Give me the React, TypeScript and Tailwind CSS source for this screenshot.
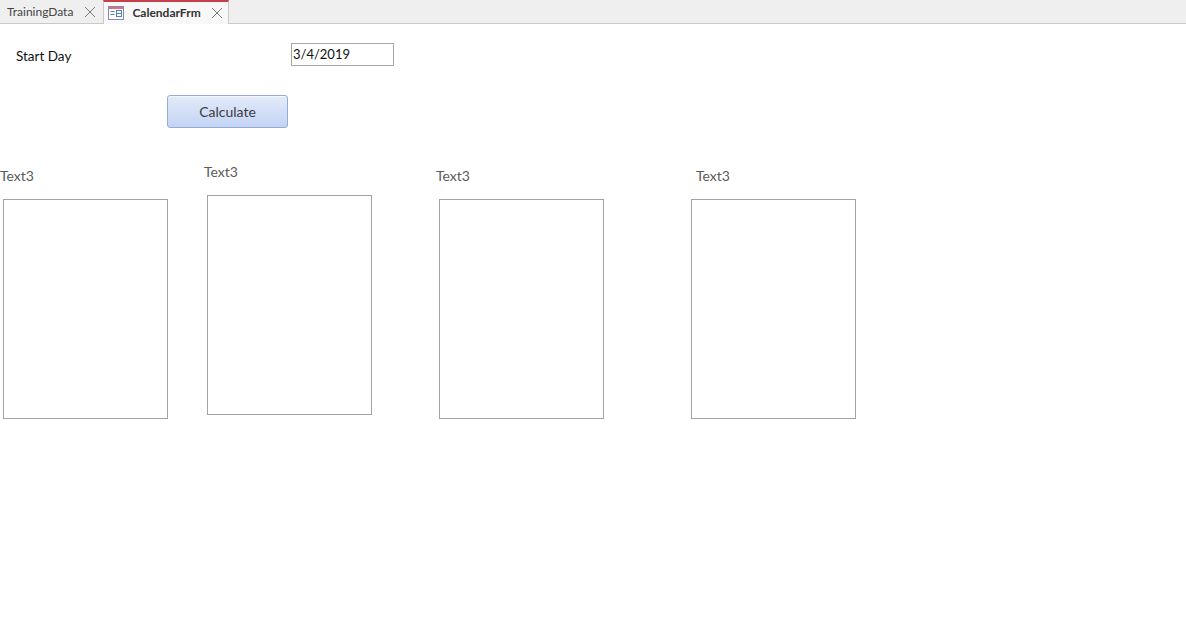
import React from "react";

const font = { fontFamily: "Lato, 'Open Sans', sans-serif" };

const FormIcon = () => (
  <svg width="16" height="14" viewBox="0 0 16 14">
    <rect x="0.5" y="0.5" width="15" height="13" fill="#fff" stroke="#8a8aa6" />
    <rect x="1" y="1" width="14" height="2" fill="#d9707a" />
    <rect x="2.5" y="5" width="4" height="1" fill="#4f7fc4" />
    <rect x="2.5" y="8" width="4" height="1" fill="#4f7fc4" />
    <rect x="8.5" y="4.5" width="5" height="6" fill="#fff" stroke="#4f7fc4" />
    <rect x="9" y="7" width="4" height="1" fill="#4f7fc4" />
  </svg>
);

const CloseX = () => (
  <svg width="12" height="12" viewBox="0 0 12 12">
    <path d="M1 1 L11 11 M11 1 L1 11" stroke="#7a7a7a" strokeWidth="1" fill="none" />
  </svg>
);

const columns = [
  { id: 1, colClass: "ml-0 mt-[4px]", labelClass: "ml-0", boxClass: "ml-[3px]" },
  { id: 2, colClass: "ml-[36px] mt-0", labelClass: "ml-0", boxClass: "ml-[3px]" },
  { id: 3, colClass: "ml-[64px] mt-[4px]", labelClass: "ml-0", boxClass: "ml-[3px]" },
  { id: 4, colClass: "ml-[87px] mt-[4px]", labelClass: "ml-[5px]", boxClass: "ml-0" },
];

const App = () => {
  return (
    <div className="w-full h-screen bg-white text-[#222]" style={font}>
      {/* document tabs */}
      <div className="flex h-[24px] bg-[#efefef] border-b border-[#c9c9c9]">
        <div className="flex items-center h-full pl-[7px] pr-[7px] text-[12px] text-[#444]">
          <span>TrainingData</span>
          <span className="ml-[11px] flex"><CloseX /></span>
        </div>
        <div className="flex items-center h-[24px] w-[126px] bg-[#f8f8f8] border-t-2 border-t-[#c4404a] border-x border-x-[#c9c9c9] pl-[4px]">
          <FormIcon />
          <span className="ml-[8px] text-[12px] font-bold text-[#333]">CalendarFrm</span>
          <span className="ml-[10px] flex"><CloseX /></span>
        </div>
      </div>

      {/* form body */}
      <div className="flex items-start">
        <div className="w-[291px] pl-[16px] pt-[24px] text-[13.5px] leading-[16px] text-[#111]">
          Start Day
        </div>
        <div className="mt-[19px] w-[103px] h-[23px] border border-[#a6a6a6] pl-[1px] text-[13px] leading-[20px] text-[#111]">
          3/4/2019
        </div>
      </div>

      <button className="ml-[167px] mt-[29px] w-[121px] h-[33px] rounded-[3px] border border-[#95acd6] bg-gradient-to-b from-[#e3ebfa] to-[#c3d3f3] text-[14px] text-[#3c3c3c] shadow-[inset_0_1px_0_#f4f7fd]">
        Calculate
      </button>

      <div className="flex items-start mt-[36px]">
        {columns.map((c) => (
          <div key={c.id} className={c.colClass}>
            <div className={`${c.labelClass} text-[14px] leading-[16px] text-[#5a5a5a]`}>Text3</div>
            <div className={`${c.boxClass} mt-[15px] w-[165px] h-[220px] border border-[#a3a3a3]`} />
          </div>
        ))}
      </div>
    </div>
  );
};

export default App;
